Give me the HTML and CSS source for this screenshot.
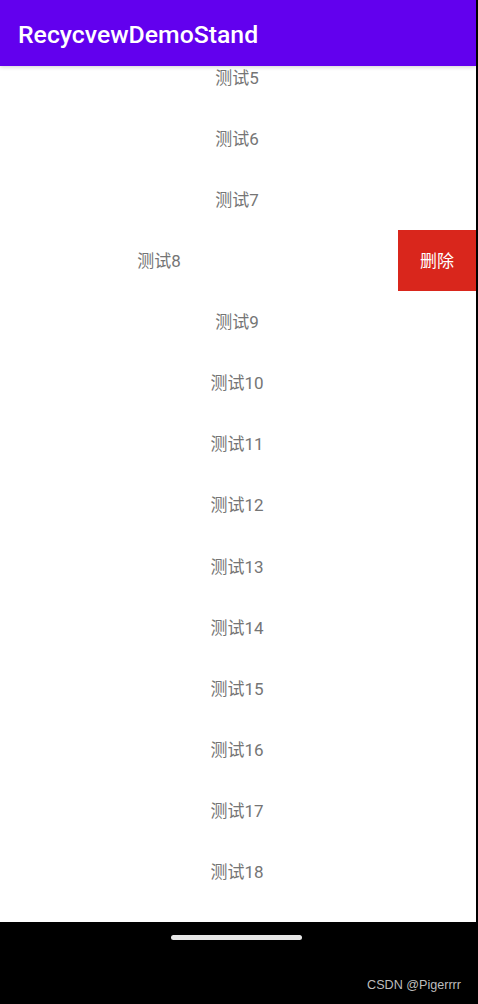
FILE: index.html
```html
<!DOCTYPE html>
<html lang="zh-CN">
<head>
  <meta charset="UTF-8">
  <title>RecycvewDemoStand</title>
  <link rel="stylesheet" href="styles.css">
</head>
<body>
  <div class="screen">
    <header class="app-bar">RecycvewDemoStand</header>
    <div class="list">
      <div class="row"><div class="row-content">测试5</div></div>
      <div class="row"><div class="row-content">测试6</div></div>
      <div class="row"><div class="row-content">测试7</div></div>
      <div class="row open">
        <div class="row-content">测试8</div>
        <button class="del">删除</button>
      </div>
      <div class="row"><div class="row-content">测试9</div></div>
      <div class="row"><div class="row-content">测试10</div></div>
      <div class="row"><div class="row-content">测试11</div></div>
      <div class="row"><div class="row-content">测试12</div></div>
      <div class="row"><div class="row-content">测试13</div></div>
      <div class="row"><div class="row-content">测试14</div></div>
      <div class="row"><div class="row-content">测试15</div></div>
      <div class="row"><div class="row-content">测试16</div></div>
      <div class="row"><div class="row-content">测试17</div></div>
      <div class="row"><div class="row-content">测试18</div></div>
    </div>
  </div>
  <div class="nav-bar">
    <div class="home-pill"></div>
    <div class="watermark">CSDN @Pigerrrr</div>
  </div>
</body>
</html>
```

FILE: styles.css
```css
body {
  margin: 0;
  width: 478px;
  background: #000;
  font-family: Roboto, "Noto Sans CJK SC", sans-serif;
  overflow: hidden;
}

.screen {
  width: 476px;
  height: 922px;
  background: #fff;
  overflow: hidden;
}

.app-bar {
  position: relative;
  z-index: 2;
  height: 66px;
  box-sizing: border-box;
  padding: 3px 18px 0;
  display: flex;
  align-items: center;
  background: #6200ee;
  color: #fff;
  font-size: 24.8px;
  font-weight: 500;
  box-shadow: 0 1px 4px rgba(0, 0, 0, 0.18);
}

.list {
  margin-top: -19.3px;
}

.row {
  display: flex;
  height: 61.1px;
  overflow: hidden;
}

.row-content {
  flex: 0 0 476px;
  box-sizing: border-box;
  padding: 0 2px 2px 0;
  display: flex;
  align-items: center;
  justify-content: center;
  font-size: 17px;
  color: #757575;
}

.row.open .row-content {
  margin-left: -78px;
}

.del {
  flex: 0 0 78px;
  border: none;
  padding: 0 0 3px;
  background: #d9261c;
  color: #fff;
  font-family: inherit;
  font-size: 17px;
}

.nav-bar {
  width: 472px;
  height: 82px;
  display: flex;
  flex-direction: column;
  align-items: center;
}

.home-pill {
  margin-top: 13px;
  width: 131px;
  height: 5px;
  border-radius: 3px;
  background: #e6e6e6;
}

.watermark {
  align-self: flex-end;
  margin: 38px 11px 0 0;
  font-family: "Liberation Sans", Arial, sans-serif;
  font-size: 12.6px;
  color: #bdbdbd;
}
```
